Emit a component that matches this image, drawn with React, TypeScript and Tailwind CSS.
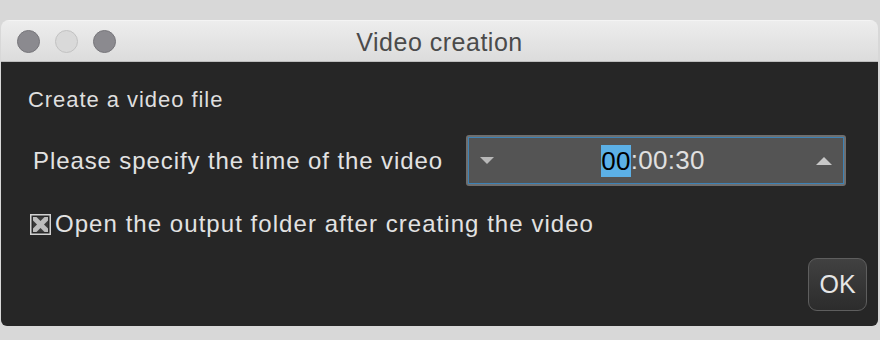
import React from "react";

function Checkbox() {
  return (
    <svg width="21" height="21" viewBox="0 0 21 21" className="shrink-0">
      <rect x="0.75" y="0.75" width="19.5" height="19.5" fill="#2a2a2a" stroke="#d2d2d2" strokeWidth="1.5" />
      <rect x="3" y="3" width="15" height="15" fill="#bdbdbd" />
      <path d="M6.5 3 L10.5 7 L14.5 3 Z" fill="#3a3a3a" />
      <path d="M6.5 18 L10.5 14 L14.5 18 Z" fill="#3a3a3a" />
      <path d="M3 6.5 L7 10.5 L3 14.5 Z" fill="#3a3a3a" />
      <path d="M18 6.5 L14 10.5 L18 14.5 Z" fill="#3a3a3a" />
    </svg>
  );
}

export default function App() {
  const font = { fontFamily: '"Liberation Sans", Arial, sans-serif' };
  return (
    <div className="w-[880px] h-[340px] bg-[#d8d8d8] pt-[20px] pl-[1px]" style={font}>
      <div className="w-[877px] rounded-t-[8px] overflow-hidden">
        <div className="relative h-[42px] flex items-center bg-gradient-to-b from-[#ededed] to-[#dcdcdc] border-b border-[#bdbdbd] border-t border-t-[#f4f4f4]">
          <div className="flex items-center gap-[15px] pl-[16px]">
            <div className="w-[23px] h-[23px] rounded-full bg-[#8b8a8f] border border-[#77767b]" />
            <div className="w-[23px] h-[23px] rounded-full bg-[#d9d9d9] border border-[#c2c2c2]" />
            <div className="w-[23px] h-[23px] rounded-full bg-[#8b8a8f] border border-[#77767b]" />
          </div>
          <div className="absolute inset-0 flex items-center justify-center pt-[3px] text-[25px] tracking-[0.5px] text-[#4b4b4b]">
            Video creation
          </div>
        </div>
      </div>
      <div className="w-[877px] h-[264px] bg-[#262626] rounded-b-[6px] flex flex-col">
        <div className="pl-[27px] pt-[25px] text-[22px] leading-[26px] tracking-[0.95px] text-[#dedede]">Create a video file</div>
        <div className="flex items-center mt-[22px] pl-[32px]">
          <div className="text-[24px] tracking-[0.9px] text-[#e2e2e2] w-[433px] whitespace-nowrap">Please specify the time of the video</div>
          <div className="w-[380px] h-[51px] rounded-[3px] border-[2px] border-[#6e6e6e] bg-[#545454]">
            <div className="w-full h-full border border-[#3d82b6] flex items-center justify-between px-[11px] relative">
              <svg width="14" height="8" viewBox="0 0 14 8"><path d="M0 0 L14 0 L7 7 Z" fill="#b8b8b8" /></svg>
              <div className="absolute inset-0 flex items-center justify-center text-[26px] tracking-[0.3px] text-[#e0e0e0] pr-[6px]">
                <span className="bg-[#5cb0e6] text-black leading-[32px]">00</span>
                <span>:00:30</span>
              </div>
              <svg width="16" height="8" viewBox="0 0 16 8"><path d="M0 8 L16 8 L8 0 Z" fill="#c8c8c8" /></svg>
            </div>
          </div>
        </div>
        <div className="flex items-center mt-[20px] pl-[29px] gap-[4px]">
          <Checkbox />
          <div className="text-[24px] tracking-[1.05px] text-[#e2e2e2] whitespace-nowrap">Open the output folder after creating the video</div>
        </div>
        <div className="flex justify-end pr-[11px] mt-[16px]">
          <div className="w-[59px] h-[53px] rounded-[9px] border border-[#5e5e5e] bg-gradient-to-b from-[#414141] to-[#2c2c2c] flex items-center justify-center text-[25px] text-[#e6e6e6]">
            OK
          </div>
        </div>
      </div>
    </div>
  );
}
